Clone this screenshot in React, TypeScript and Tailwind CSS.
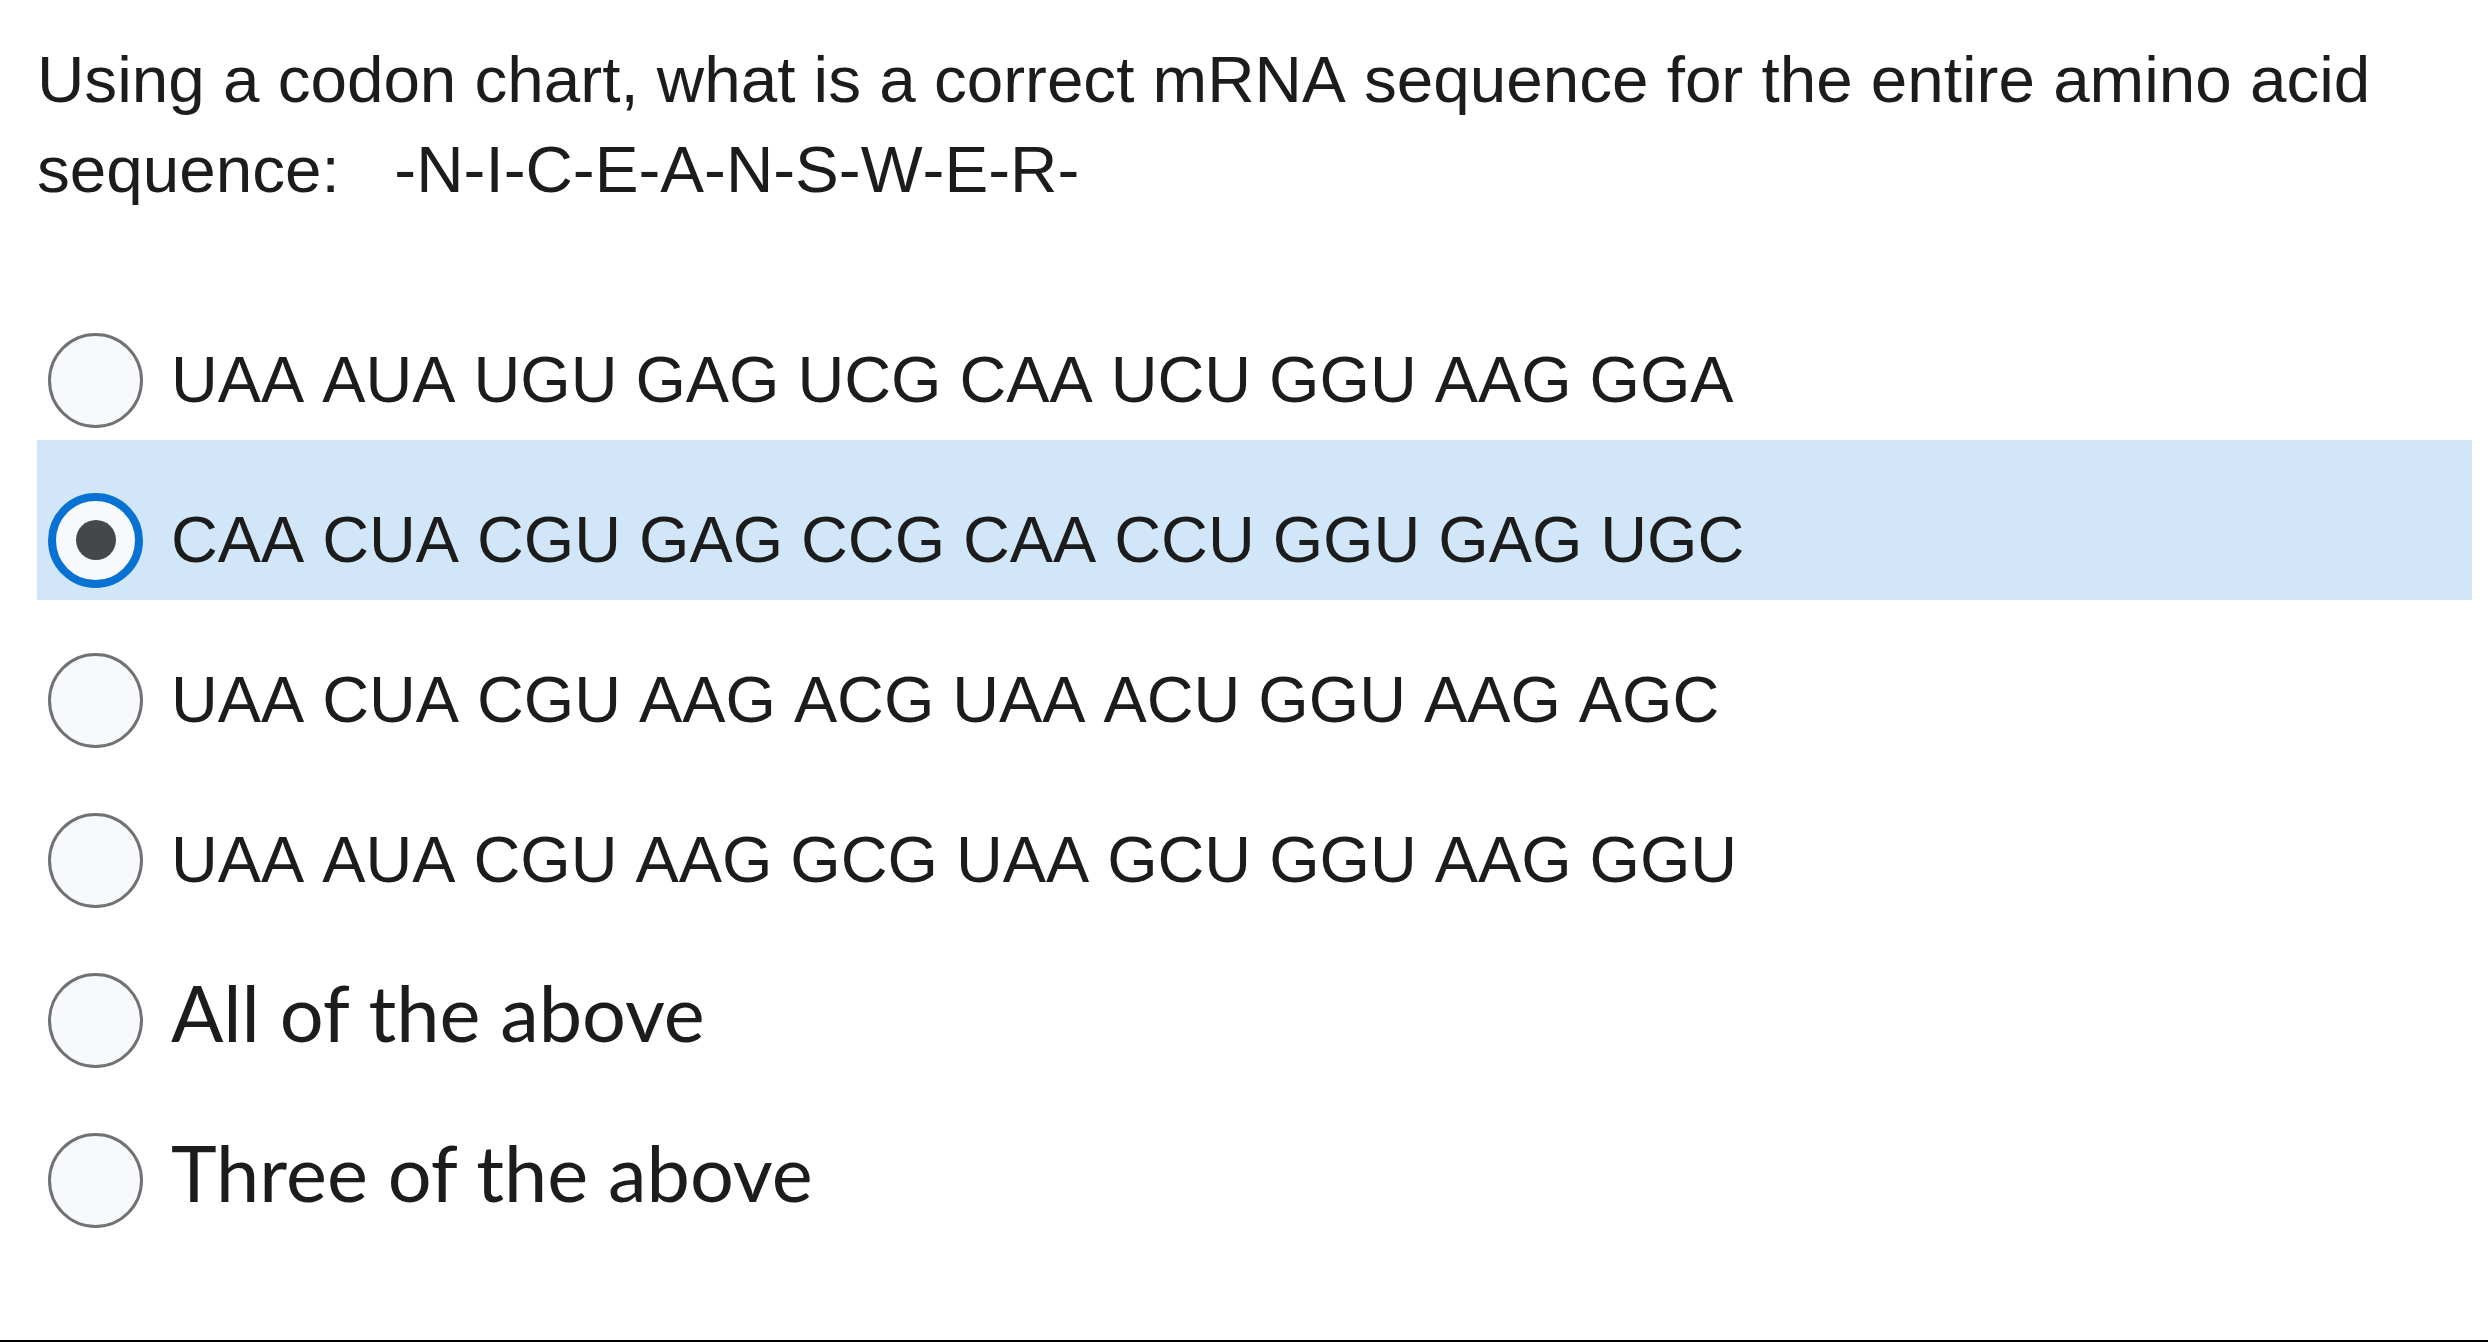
import React from "react";

type Opt = { label: string; lato?: boolean; selected?: boolean };

const options: Opt[] = [
  { label: "UAA AUA UGU GAG UCG CAA UCU GGU AAG GGA" },
  { label: "CAA CUA CGU GAG CCG CAA CCU GGU GAG UGC", selected: true },
  { label: "UAA CUA CGU AAG ACG UAA ACU GGU AAG AGC" },
  { label: "UAA AUA CGU AAG GCG UAA GCU GGU AAG GGU" },
  { label: "All of the above", lato: true },
  { label: "Three of the above", lato: true },
];

function Radio({ selected }: { selected?: boolean }) {
  if (selected) {
    return (
      <div className="w-[95px] h-[95px] shrink-0 rounded-full border-[8px] border-[#0772d1] bg-[#f8f9fd] flex items-center justify-center">
        <div className="w-[40px] h-[40px] rounded-full bg-[#45474b]" />
      </div>
    );
  }
  return (
    <div className="w-[95px] h-[95px] shrink-0 rounded-full border-[3px] border-[#717274] bg-[#f8f9fd]" />
  );
}

export default function App() {
  return (
    <div className="w-[2488px] h-[1342px] bg-white flex flex-col overflow-hidden">
      <div className="flex-1 pl-[37px] pr-[16px] pt-[35px]">
        <div
          className="text-[65.6px] leading-[90px] text-[#1c1c1c] [font-kerning:none]"
          style={{ fontFamily: '"Liberation Sans", Arial, sans-serif' }}
        >
          <div>Using a codon chart, what is a correct mRNA sequence for the entire amino acid</div>
          <div>sequence:&nbsp;&nbsp;&nbsp;-N-I-C-E-A-N-S-W-E-R-</div>
        </div>
        <div className="mt-[65px] flex flex-col">
          {options.map((o, i) => (
            <div
              key={i}
              className={
                "h-[160px] flex items-center pl-[11px] pt-[40px] " +
                (o.selected ? "bg-[#d2e6f9]" : "")
              }
            >
              <Radio selected={o.selected} />
              {o.lato ? (
                <span
                  className="ml-[28px] text-[77.5px] leading-none text-[#1c1c1c] pb-[15px]"
                  style={{ fontFamily: "Lato, sans-serif" }}
                >
                  {o.label}
                </span>
              ) : (
                <span
                  className="ml-[28px] text-[64.8px] leading-none text-[#1c1c1c] [font-kerning:none]"
                  style={{ fontFamily: '"Liberation Sans", Arial, sans-serif' }}
                >
                  {o.label}
                </span>
              )}
            </div>
          ))}
        </div>
      </div>
      <div className="h-[2px] bg-black w-full" />
    </div>
  );
}
